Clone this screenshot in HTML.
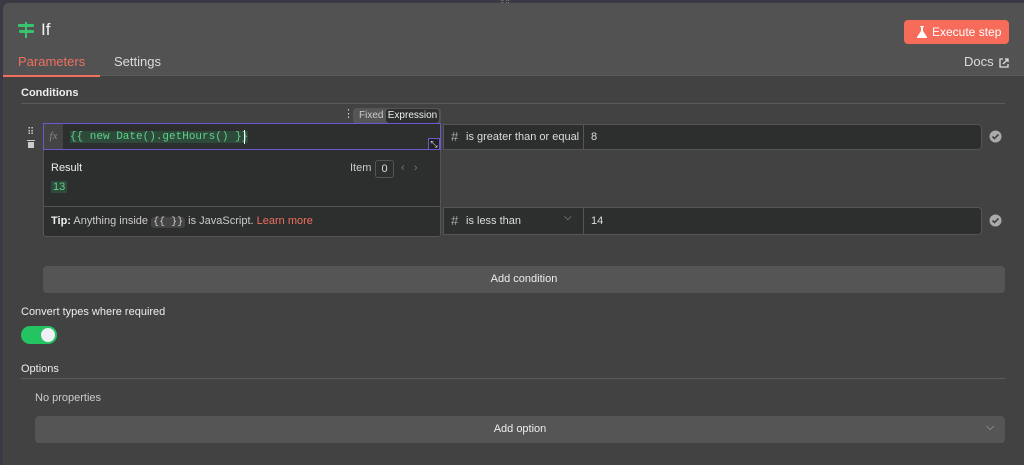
<!DOCTYPE html>
<html><head><style>
*{box-sizing:border-box;margin:0;padding:0}
body{width:1024px;height:465px;overflow:hidden;background:#3b3a44;font-family:"Liberation Sans",sans-serif;color:#e6e6e6;position:relative}
.panel{position:absolute;left:3px;top:3px;right:0;bottom:0;background:#424243;border-radius:6px 0 0 0;overflow:hidden}
.head{position:absolute;left:0;top:0;right:0;height:73px;background:#525253;border-bottom:1px solid #5a5a5a}
.abs{position:absolute}
.mono{font-family:"Liberation Mono",monospace}
.inp{position:absolute;background:#2d2e2e;border:1px solid #555}
</style></head><body>
<div class="abs" style="left:500px;top:0;width:26px;height:4px;color:#888;font-size:6px;letter-spacing:1px">⠿⠿</div>
<div class="panel">
<div class="head">
 <svg class="abs" style="left:15px;top:19px" width="16" height="16" viewBox="0 0 16 16"><rect x="0" y="2" width="16" height="3" rx="1" fill="#36c46f"/><rect x="1" y="8" width="15" height="3" rx="1" fill="#36c46f"/><rect x="7" y="0" width="2" height="16" fill="#36c46f"/></svg>
 <div class="abs" style="left:38px;top:17px;font-size:17px;color:#f0f0f0">If</div>
 <div class="abs" style="left:901px;top:17px;width:105px;height:24px;background:#f76b5b;border-radius:4px;color:#fff;font-size:12px;line-height:24px;padding-left:28px">Execute step</div>
 <svg class="abs" style="left:914px;top:23px" width="10" height="12" viewBox="0 0 10 12"><path d="M3 0h4v1H6v4l4 6v1H0v-1l4-6V1H3z" fill="#fff"/></svg>
 <div class="abs" style="left:15px;top:51px;font-size:13px;color:#f0705f">Parameters</div>
 <div class="abs" style="left:0;top:72px;width:97px;height:2px;background:#f0705f"></div>
 <div class="abs" style="left:111px;top:51px;font-size:13px;color:#ddd">Settings</div>
 <div class="abs" style="left:961px;top:51px;font-size:13px;color:#ddd">Docs</div>
 <svg class="abs" style="left:996px;top:55px" width="10" height="10" viewBox="0 0 10 10"><path d="M4 1H1v8h8V6M6 1h3v3M9 1L4 6" stroke="#ddd" fill="none" stroke-width="1.3"/></svg>
</div>
<div class="abs" style="left:18px;top:84px;font-size:11px;font-weight:bold;color:#eee">Conditions</div>
<div class="abs" style="left:18px;top:100px;width:984px;height:1px;background:#5a5a5a"></div>
<div class="abs" style="left:340px;top:104px;font-size:11px;color:#ccc">⋮</div>
<div class="abs" style="left:350px;top:105px;width:88px;height:16px;background:#555;border-radius:4px;font-size:10px;line-height:16px;color:#ccc;padding-left:6px">Fixed</div>
<div class="abs" style="left:383px;top:106px;width:53px;height:14px;background:#2d2e2e;border-radius:3px;font-size:10px;line-height:14px;color:#eee;text-align:center">Expression</div>
<div class="abs" style="left:24px;top:124px;font-size:10px;color:#ccc">⠿</div>
<svg class="abs" style="left:24px;top:136px" width="8" height="9" viewBox="0 0 8 9"><path d="M0 1h8v1H0zM1 3h6v6H1z" fill="#ccc"/></svg>
<div class="inp" style="left:440px;top:121px;width:539px;height:26px;border-radius:0 4px 4px 0"></div>
<div class="abs" style="left:580px;top:121px;width:1px;height:26px;background:#555"></div>
<div class="abs" style="left:448px;top:126px;font-size:13px;color:#aaa">#</div>
<div class="abs" style="left:463px;top:128px;font-size:11px;color:#ddd">is greater than or equal</div>
<div class="abs" style="left:588px;top:128px;font-size:11px;color:#ddd">8</div>
<div class="inp" style="left:440px;top:204px;width:539px;height:28px;border-radius:0 4px 4px 0"></div>
<div class="abs" style="left:580px;top:204px;width:1px;height:28px;background:#555"></div>
<div class="abs" style="left:448px;top:210px;font-size:13px;color:#aaa">#</div>
<div class="abs" style="left:463px;top:212px;font-size:11px;color:#ddd">is less than</div>
<div class="abs" style="left:561px;top:209px;font-size:10px;color:#aaa">⌵</div>
<div class="abs" style="left:588px;top:212px;font-size:11px;color:#ddd">14</div>
<svg class="abs" style="left:986px;top:127px" width="13" height="13"><circle cx="6.5" cy="6.5" r="6" fill="#aaa"/><path d="M3.5 6.5l2 2 4-4" stroke="#424243" stroke-width="1.6" fill="none"/></svg>
<svg class="abs" style="left:986px;top:211px" width="13" height="13"><circle cx="6.5" cy="6.5" r="6" fill="#aaa"/><path d="M3.5 6.5l2 2 4-4" stroke="#424243" stroke-width="1.6" fill="none"/></svg>
<!-- expression editor -->
<div class="abs" style="left:40px;top:120px;width:398px;height:114px;background:#2d2e2e;border:1px solid #555;border-radius:3px"></div>
<div class="abs" style="left:40px;top:120px;width:398px;height:27px;border:1px solid #6a5acd;background:#2d2e2e"></div>
<div class="abs" style="left:41px;top:121px;width:19px;height:25px;background:#444;color:#888;font-style:italic;font-family:'Liberation Serif',serif;font-size:11px;line-height:25px;text-align:center">fx</div>
<div class="abs mono" style="left:67px;top:128px;font-size:11px;color:#5fd08a;background:#2e4a3a">{{ new Date().getHours() }}</div>
<div class="abs" style="left:241px;top:127px;width:1px;height:14px;background:#fff"></div>
<div class="abs" style="left:425px;top:135px;width:12px;height:12px;border:1px solid #6a5acd;background:#222;font-size:9px;line-height:10px;text-align:center;color:#ddd">⤡</div>
<div class="abs" style="left:48px;top:159px;font-size:11px;color:#eee">Result</div>
<div class="abs" style="left:347px;top:159px;font-size:11px;color:#ccc">Item</div>
<div class="abs" style="left:372px;top:157px;width:19px;height:18px;border:1px solid #555;border-radius:3px;font-size:11px;line-height:16px;text-align:center;color:#ddd">0</div>
<div class="abs" style="left:398px;top:159px;font-size:11px;color:#777">‹ &nbsp; ›</div>
<div class="abs" style="left:48px;top:178px;font-size:11px;color:#5fd08a;background:#2e4a3a;padding:0 2px">13</div>
<div class="abs" style="left:40px;top:203px;width:398px;height:1px;background:#555"></div>
<div class="abs" style="left:48px;top:212px;font-size:11px;color:#ccc"><b style="color:#eee">Tip:</b> Anything inside <span class="mono" style="background:#444;border-radius:3px;font-size:10px;padding:0 2px">{{ }}</span> is JavaScript. <span style="color:#f0705f">Learn more</span></div>
<div class="abs" style="left:40px;top:263px;width:962px;height:27px;background:#555;border-radius:4px;font-size:11px;line-height:27px;text-align:center;color:#eee">Add condition</div>
<div class="abs" style="left:18px;top:303px;font-size:11px;color:#eee">Convert types where required</div>
<div class="abs" style="left:18px;top:323px;width:36px;height:18px;background:#24c463;border-radius:9px"></div>
<div class="abs" style="left:38px;top:325px;width:14px;height:14px;background:#eef0f6;border-radius:7px"></div>
<div class="abs" style="left:18px;top:360px;font-size:11px;color:#eee">Options</div>
<div class="abs" style="left:18px;top:375px;width:984px;height:1px;background:#5a5a5a"></div>
<div class="abs" style="left:32px;top:389px;font-size:11px;color:#ccc">No properties</div>
<div class="abs" style="left:32px;top:413px;width:970px;height:27px;background:#555;border-radius:4px;font-size:11px;line-height:27px;text-align:center;color:#eee">Add option</div>
<div class="abs" style="left:983px;top:418px;font-size:11px;color:#bbb">⌵</div>
</div>
</body></html>
